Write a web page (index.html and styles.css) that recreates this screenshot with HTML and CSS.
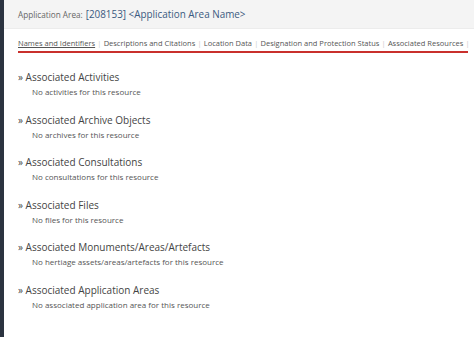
FILE: index.html
```html
<!DOCTYPE html>
<html lang="en">
<head>
    <meta charset="UTF-8">
    <meta name="viewport" content="width=device-width, initial-scale=1.0">
    <title>Associated Resources</title>
    <link rel="stylesheet" href="styles.css">
</head>
<body>
    <div class="page">
        <header class="record_header">
            <span class="record_type">Application Area:</span>
            <span class="record_name">[208153] &lt;Application Area Name&gt;</span>
        </header>
        <nav class="tabs">
            <span class="tab active">Names and Identifiers</span>
            <span class="sep">|</span>
            <span class="tab">Descriptions and Citations</span>
            <span class="sep">|</span>
            <span class="tab">Location Data</span>
            <span class="sep">|</span>
            <span class="tab">Designation and Protection Status</span>
            <span class="sep">|</span>
            <span class="tab">Associated Resources</span>
            <span class="sep last">|</span>
        </nav>
        <main class="resources">
            <div class="resource">
                <h4>&raquo; Associated Activities</h4>
                <p>No activities for this resource</p>
            </div>
            <div class="resource">
                <h4>&raquo; Associated Archive Objects</h4>
                <p>No archives for this resource</p>
            </div>
            <div class="resource">
                <h4>&raquo; Associated Consultations</h4>
                <p>No consultations for this resource</p>
            </div>
            <div class="resource">
                <h4>&raquo; Associated Files</h4>
                <p>No files for this resource</p>
            </div>
            <div class="resource">
                <h4>&raquo; Associated Monuments/Areas/Artefacts</h4>
                <p>No hertiage assets/areas/artefacts for this resource</p>
            </div>
            <div class="resource">
                <h4>&raquo; Associated Application Areas</h4>
                <p>No associated application area for this resource</p>
            </div>
        </main>
    </div>
</body>
</html>
```

FILE: styles.css
```css
* {
    box-sizing: border-box;
}

body {
    margin: 0;
    font-family: "Open Sans", sans-serif;
    background-color: #2b3340;
}

.page {
    margin-left: 4px;
    min-height: 337px;
    background-color: #fff;
}

.record_header {
    background-color: #f4f4f4;
    height: 29px;
    padding: 0 14px;
    display: flex;
    align-items: center;
    gap: 3px;
    border-bottom: 1px solid #ececec;
}
.record_type {
    font-size: 8.2px;
    color: #666;
}
.record_name {
    font-size: 9.9px;
    color: #3b5a80;
}

.tabs {
    margin: 0 6px 0 14px;
    padding: 9px 0 2px;
    display: flex;
    gap: 2.2px;
    font-size: 7.5px;
    line-height: 11px;
    color: #555;
    white-space: nowrap;
    border-bottom: 2px solid #c9302c;
}
.tab.active {
    text-decoration: underline;
}
.sep {
    color: #ccc;
}
.sep.last {
    margin-right: -8px;
}

.resources {
    padding: 16px 14px 0;
}
.resource {
    height: 42.6px;
}
.resource h4 {
    margin: 0;
    font-size: 10px;
    font-weight: normal;
    color: #444;
    line-height: 16px;
}
.resource p {
    margin: 0 0 0 14px;
    font-size: 8px;
    color: #555;
    line-height: 13px;
}
```
